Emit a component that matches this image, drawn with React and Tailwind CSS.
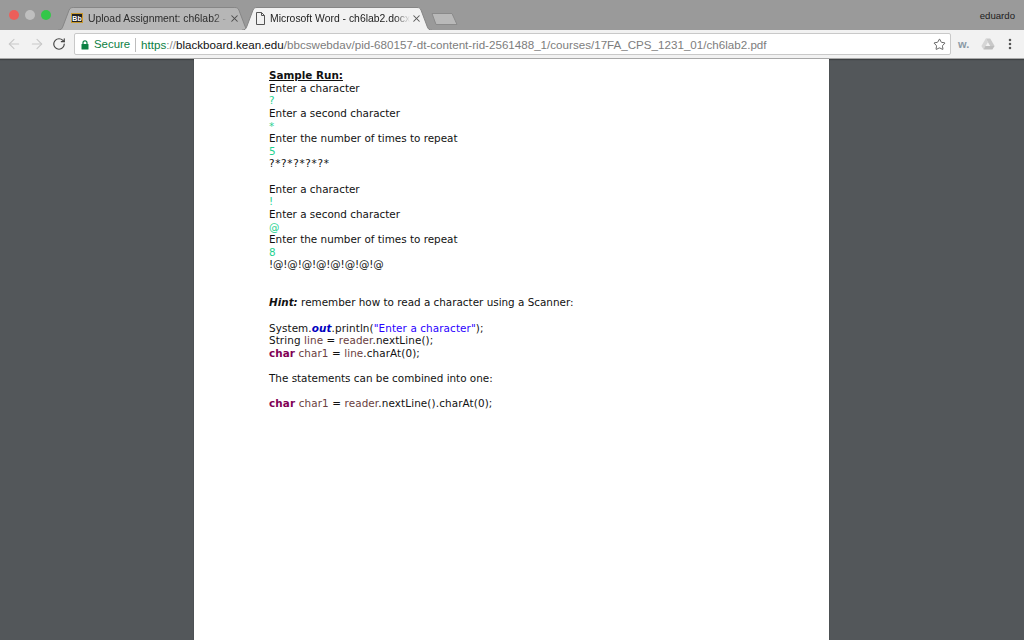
import { ArrowLeft, ArrowRight, RotateCw, Star, X, EllipsisVertical } from "lucide-react";

const green = "text-[#1fd28f]";
const purple = "font-bold text-[#7f0055]";
const brown = "text-[#6a3e3e]";

const Line = ({ className = "", children }) => (
  <div className={`h-[12.64px] leading-[12.64px] whitespace-pre ${className}`}>{children}</div>
);

const Blank = () => <div className="h-[12.64px]" />;

const TabShape = ({ fill, stroke }) => (
  <svg className="absolute inset-0" width="100%" height="100%" viewBox="0 0 190 23" preserveAspectRatio="none">
    <path d="M0 23 C3 23 4 22 5 19 L11 3 C12 1 13 0.5 15 0.5 L175 0.5 C177 0.5 178 1 179 3 L185 19 C186 22 187 23 190 23 Z" fill={fill} />
    <path d="M0 23 C3 23 4 22 5 19 L11 3 C12 1 13 0.5 15 0.5 L175 0.5 C177 0.5 178 1 179 3 L185 19 C186 22 187 23 190 23" fill="none" stroke={stroke} strokeWidth="1" vectorEffect="non-scaling-stroke" />
  </svg>
);

const Traffic = ({ color }) => <span className={`h-[10px] w-[10px] rounded-full ${color}`} />;

const BlackboardIcon = () => (
  <span className="flex h-[10px] w-[12px] shrink-0 items-center justify-center border border-[#c99a2e] bg-[#222] text-[7px] font-bold leading-none text-white">
    Bb
  </span>
);

const FileIcon = () => (
  <svg width="11" height="13" viewBox="0 0 11 13" fill="none" stroke="#555" strokeWidth="1" className="shrink-0">
    <path d="M1.5 0.5H6.5L9.5 3.5V12.5H1.5Z" />
    <path d="M6.5 0.5V3.5H9.5" />
  </svg>
);

const LockIcon = () => (
  <svg width="8" height="10" viewBox="0 0 8 10" className="shrink-0">
    <path d="M2 4.5V2.8C2 1.6 2.8 0.8 4 0.8C5.2 0.8 6 1.6 6 2.8V4.5" fill="none" stroke="#0b8043" strokeWidth="1.2" />
    <rect x="0.5" y="4" width="7" height="5.5" rx="0.6" fill="#0b8043" />
  </svg>
);

const DriveIcon = () => (
  <svg width="14" height="12" viewBox="0 0 14 12">
    <path d="M4.8 0.5H9.2L13.6 8H9.2Z" fill="#c9c9c9" />
    <path d="M4.8 0.5L0.4 8L2.6 11.5L7 4Z" fill="#d6d6d6" />
    <path d="M4.4 8H13.6L11.4 11.5H2.6Z" fill="#bdbdbd" />
  </svg>
);

export default function App() {
  return (
    <div className="flex h-[640px] w-[1024px] flex-col overflow-hidden bg-[#53575a] font-['Liberation_Sans',sans-serif]">
      {/* window title + tabs */}
      <div className="flex h-[30px] shrink-0 items-end bg-[#9a9a9a] pl-[9px]">
        <div className="mb-[10px] flex gap-[6px] self-end">
          <Traffic color="bg-[#ec5f5a]" />
          <Traffic color="bg-[#bfbfbf]" />
          <Traffic color="bg-[#34c749]" />
        </div>
        <div className="relative ml-[7px] flex h-[23px] w-[192px] items-center pl-[13px] pr-[10px]">
          <TabShape fill="#b6b6b6" stroke="#868686" />
          <div className="relative flex w-full items-center">
            <BlackboardIcon />
            <span className="ml-[5px] whitespace-nowrap text-[10.4px] text-[#2b2b2b] [mask-image:linear-gradient(to_right,black_125px,transparent_140px)]">
              Upload Assignment: ch6lab2 -
            </span>
            <X size={11} strokeWidth={2.2} className="ml-auto text-[#4a4a4a]" />
          </div>
        </div>
        <div className="relative z-10 -ml-[8px] flex h-[23px] w-[190px] items-center pl-[13px] pr-[10px]">
          <TabShape fill="#f2f2f2" stroke="#868686" />
          <div className="relative flex w-full items-center">
            <FileIcon />
            <span className="ml-[4px] whitespace-nowrap text-[10.4px] text-[#222] [mask-image:linear-gradient(to_right,black_125px,transparent_140px)]">
              Microsoft Word - ch6lab2.docx
            </span>
            <X size={11} strokeWidth={2.2} className="ml-auto text-[#555]" />
          </div>
        </div>
        <svg width="27" height="12" viewBox="0 0 27 12" className="mb-[5px] -ml-[1px] shrink-0">
          <path d="M1 0.5H21L26 11.5H5Z" fill="#b9b9b9" stroke="#8a8a8a" />
        </svg>
        <span className="mb-[8px] ml-auto mr-[9px] text-[9.6px] leading-[12px] text-[#1c1c1c]">eduardo</span>
      </div>

      {/* toolbar */}
      <div className="flex h-[29px] shrink-0 items-center border-b border-[#a8a8a8] bg-[#f2f2f2] pl-[6px] shadow-[0_1px_1px_rgba(0,0,0,0.25)]">
        <ArrowLeft size={16} strokeWidth={1.6} className="text-[#c8c8c8]" />
        <ArrowRight size={16} strokeWidth={1.6} className="ml-[7px] text-[#c8c8c8]" />
        <RotateCw size={14} strokeWidth={2} className="ml-[7px] text-[#444]" />
        <div className="ml-[8px] flex h-[22px] w-[877px] items-center rounded-[2px] border border-[#c9c9c9] bg-white pl-[6px] pr-[4px] pt-[1px] text-[11.62px]">
          <LockIcon />
          <span className="ml-[5px] text-[11.4px] text-[#0b8043]">Secure</span>
          <span className="ml-[5px] mr-[5px] h-[14px] w-px bg-[#bdbdbd]" />
          <span className="whitespace-nowrap">
            <span className="text-[#0b8043]">https</span>
            <span className="text-[#8a8a8a]">://</span>
            <span className="text-[#111]">blackboard.kean.edu</span>
            <span className="text-[#7d7d7d]">/bbcswebdav/pid-680157-dt-content-rid-2561488_1/courses/17FA_CPS_1231_01/ch6lab2.pdf</span>
          </span>
          <Star size={13} strokeWidth={1.5} className="ml-auto text-[#444]" />
        </div>
        <span className="ml-[7px] w-[16px] font-['Liberation_Sans',sans-serif] text-[11px] font-bold text-[#8a99a5]">w.</span>
        <span className="ml-[7px]"><DriveIcon /></span>
        <EllipsisVertical size={14} strokeWidth={2.4} className="ml-[8px] text-[#555]" />
      </div>

      {/* pdf viewer */}
      <div className="flex flex-1 justify-center overflow-hidden pr-[1px]">
        <div className="h-full w-[635px] bg-white pl-[75px] pt-[10px] font-['DejaVu_Sans',sans-serif] text-[10.4px] text-[#111] shadow-[0_0_1px_rgba(0,0,0,0.4)]">
          <Line className="font-bold underline">Sample Run:</Line>
          <Line>Enter a character</Line>
          <Line className={green}>?</Line>
          <Line>Enter a second character</Line>
          <Line className={green}>*</Line>
          <Line>Enter the number of times to repeat</Line>
          <Line className={green}>5</Line>
          <Line className="tracking-[0.7px]">?*?*?*?*?*</Line>
          <Blank />
          <Line>Enter a character</Line>
          <Line className={green}>!</Line>
          <Line>Enter a second character</Line>
          <Line className={green}>@</Line>
          <Line>Enter the number of times to repeat</Line>
          <Line className={green}>8</Line>
          <Line className="tracking-[-0.12px]">!@!@!@!@!@!@!@!@</Line>
          <Blank />
          <Blank />
          <Line><span className="font-bold italic">Hint:</span> remember how to read a character using a Scanner:</Line>
          <Blank />
          <Line className="tracking-[0.1px]">System.<span className="font-bold italic text-[#0000c0]">out</span>.println(<span className="text-[#2a00ff]">"Enter a character"</span>);</Line>
          <Line className="tracking-[0.1px]">String <span className={brown}>line</span> = <span className={brown}>reader</span>.nextLine();</Line>
          <Line className="tracking-[0.1px]"><span className={purple}>char</span> <span className={brown}>char1</span> = <span className={brown}>line</span>.charAt(0);</Line>
          <Blank />
          <Line>The statements can be combined into one:</Line>
          <Blank />
          <Line className="tracking-[0.12px]"><span className={purple}>char</span> <span className={brown}>char1</span> = <span className={brown}>reader</span>.nextLine().charAt(0);</Line>
        </div>
      </div>
    </div>
  );
}
